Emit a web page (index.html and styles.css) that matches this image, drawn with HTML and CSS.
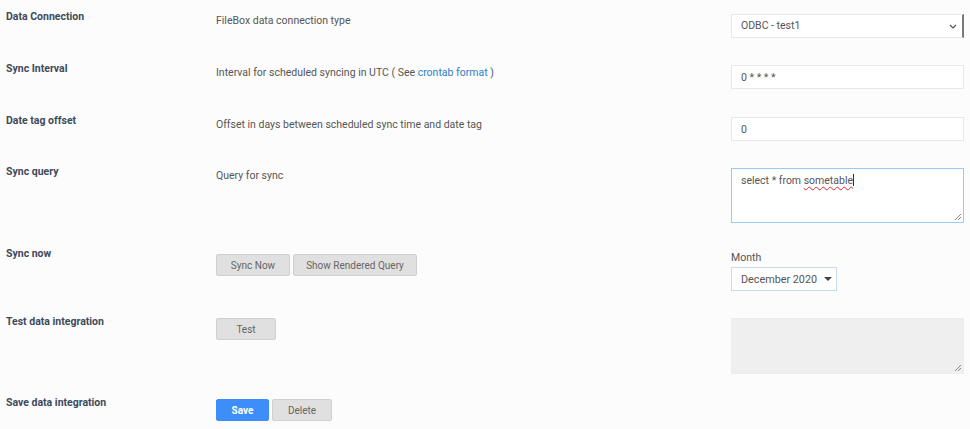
FILE: index.html
```html
<!DOCTYPE html>
<html>
<head>
<meta charset="utf-8">
<link rel="stylesheet" href="styles.css">
</head>
<body>
<div class="form">
  <div class="row r1">
    <div class="label">Data Connection</div>
    <div class="desc">FileBox data connection type</div>
    <div class="ctrl">
      <div class="select field">
        <span>ODBC - test1</span>
        <svg class="chev" width="8" height="5" viewBox="0 0 8 5"><path d="M1 1 L4 4 L7 1" fill="none" stroke="#555" stroke-width="1.2"/></svg>
      </div>
    </div>
  </div>
  <div class="row r2">
    <div class="label">Sync Interval</div>
    <div class="desc">Interval for scheduled syncing in UTC ( See <a class="link">crontab format</a> )</div>
    <div class="ctrl"><div class="input field">0 * * * *</div></div>
  </div>
  <div class="row r3">
    <div class="label">Date tag offset</div>
    <div class="desc">Offset in days between scheduled sync time and date tag</div>
    <div class="ctrl"><div class="input field">0</div></div>
  </div>
  <div class="row r4">
    <div class="label">Sync query</div>
    <div class="desc">Query for sync</div>
    <div class="ctrl">
      <div class="textarea field focus">select * from <span class="spell">sometable</span><span class="caret"></span>
        <svg class="grip" width="8" height="8" viewBox="0 0 8 8"><path d="M7 1 L1 7 M7 4 L4 7" stroke="#888" stroke-width="1"/></svg>
      </div>
    </div>
  </div>
  <div class="row r5">
    <div class="label">Sync now</div>
    <div class="desc btns">
      <button class="btn w-sync">Sync Now</button>
      <button class="btn w-show">Show Rendered Query</button>
    </div>
    <div class="ctrl">
      <div class="mlabel">Month</div>
      <div class="month">December 2020<span class="tri"></span></div>
    </div>
  </div>
  <div class="row r6">
    <div class="label">Test data integration</div>
    <div class="desc btns">
      <button class="btn w-test">Test</button>
    </div>
    <div class="ctrl">
      <div class="gray field">
        <svg class="grip" width="8" height="8" viewBox="0 0 8 8"><path d="M7 1 L1 7 M7 4 L4 7" stroke="#888" stroke-width="1"/></svg>
      </div>
    </div>
  </div>
  <div class="row r7">
    <div class="label">Save data integration</div>
    <div class="desc btns">
      <button class="btn primary w-save">Save</button>
      <button class="btn w-del">Delete</button>
    </div>
    <div class="ctrl"></div>
  </div>
</div>
</body>
</html>
```
FILE: styles.css
```css
html, body {
  margin: 0;
  padding: 0;
  background: #fcfcfc;
  font-family: Roboto, "Liberation Sans", Arial, sans-serif;
  font-size: 10.5px;
  color: #555;
}
.form {
  padding: 9px 6px 0 6px;
  width: 958px;
}
.row {
  display: flex;
  align-items: flex-start;
}
.r1 { height: 52px; }
.r2 { height: 52px; }
.r3 { height: 51px; }
.r4 { height: 82px; }
.r5 { height: 68px; }
.r6 { height: 81px; }
.r7 { height: 40px; }
.label {
  width: 210px;
  flex: none;
  font-weight: bold;
  color: #3e4a5b;
  line-height: 15px;
}
.desc {
  flex: 1;
  padding-top: 4px;
  line-height: 15px;
  color: #555;
}
.link { color: #2a7fc9; }
.ctrl {
  width: 233px;
  flex: none;
  position: relative;
}
.field {
  box-sizing: border-box;
  width: 233px;
  background: #fff;
  border: 1px solid #e7e7e7;
  color: #555;
  padding: 0 9px;
}
.select {
  margin-top: 5px;
  height: 24px;
  line-height: 24px;
  display: flex;
  justify-content: space-between;
  align-items: center;
  border-right: 2px solid #777;
  padding-right: 5px;
}
.input {
  margin-top: 4px;
  height: 24px;
  line-height: 24px;
}
.textarea {
  position: relative;
  margin-top: 4px;
  height: 55px;
  line-height: 22px;
  border-color: #9ec9ee;
  padding-top: 1px;
}
.spell {
  text-decoration: underline wavy #e0242b;
  text-decoration-thickness: 1px;
  text-underline-offset: 2px;
}
.caret {
  display: inline-block;
  width: 1px;
  height: 12px;
  background: #333;
  vertical-align: -2px;
}
.grip {
  position: absolute;
  right: 1px;
  bottom: 1px;
}
.btns {
  display: flex;
  gap: 3px;
}
.r5 .btns { padding-top: 8px; }
.r6 .btns { padding-top: 4px; }
.r7 .btns { padding-top: 4px; }
.btn {
  box-sizing: border-box;
  height: 22px;
  font-family: Roboto, "Liberation Sans", Arial, sans-serif;
  font-size: 10px;
  color: #666;
  background: #e0e0e0;
  border: 1px solid #cfcfcf;
  border-radius: 2px;
  padding: 0;
}
.primary {
  background: #3d8ef9;
  border-color: #3d8ef9;
  color: #fff;
  font-weight: bold;
}
.w-sync { width: 74px; }
.w-show { width: 124px; }
.w-test { width: 60px; }
.w-save { width: 53px; }
.w-del { width: 60px; }
.mlabel {
  margin-top: 4px;
  line-height: 15px;
  color: #555;
}
.month {
  margin-top: 2px;
  box-sizing: border-box;
  width: 106px;
  height: 24px;
  line-height: 23px;
  border: 1px solid #c9dcef;
  background: #fff;
  padding-left: 9px;
  color: #555;
  font-size: 10.8px;
  white-space: nowrap;
}
.tri {
  display: inline-block;
  width: 0;
  height: 0;
  border-left: 4px solid transparent;
  border-right: 4px solid transparent;
  border-top: 4px solid #444;
  margin-left: 7px;
  vertical-align: 2px;
}
.gray {
  position: relative;
  margin-top: 4px;
  height: 56px;
  background: #efefef;
  border-color: #ececec;
}
```
